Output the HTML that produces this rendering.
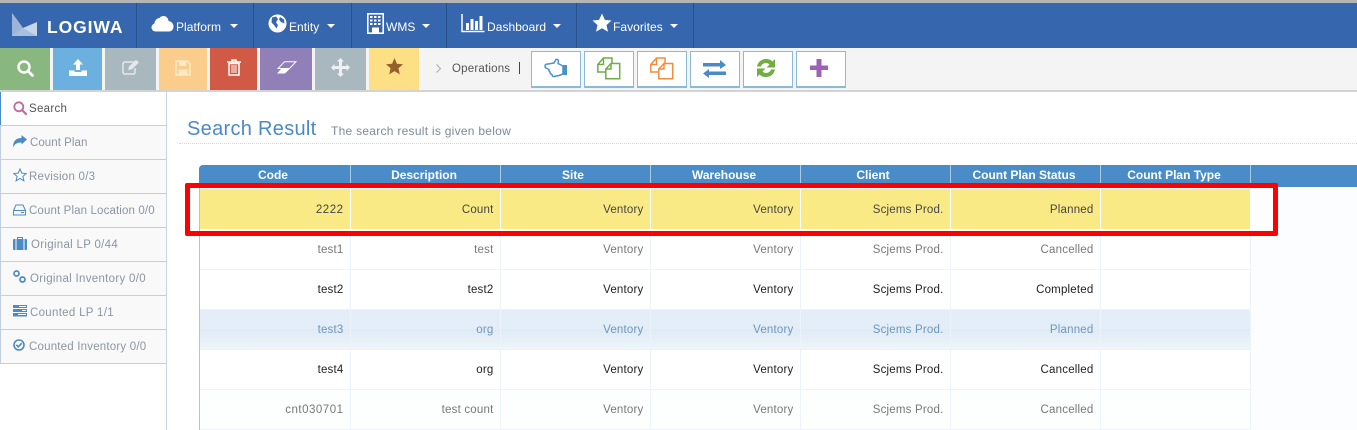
<!DOCTYPE html>
<html><head><meta charset="utf-8"><style>
html,body{margin:0;padding:0;background:#fff}
body{width:1357px;height:430px;overflow:hidden;position:relative;font-family:"Liberation Sans",sans-serif}
.a{position:absolute}
svg{position:absolute;display:block}
.nav{position:absolute;top:3px;height:45px;border-right:1px solid #265089}
.nt{position:absolute;top:20px;line-height:14px;color:#fff;white-space:nowrap;font-family:"Liberation Sans",sans-serif;font-size:12px;letter-spacing:.05px}
.car{position:absolute;top:24px;width:0;height:0;border-left:4.5px solid transparent;border-right:4.5px solid transparent;border-top:4.5px solid #fff}
.tb{position:absolute;top:48px;height:42px}
.op{position:absolute;top:51px;width:48px;height:34px;background:#fff;border:1px solid #8bb9d6;border-bottom-width:2px}
.si{position:absolute;left:1px;width:165px;height:33px;background:#f9f9f9;border-bottom:1px solid #c3cfdf}
.st{position:absolute;top:10px;font-size:11.5px;line-height:14px;color:#8a96a3;white-space:nowrap;font-family:"Liberation Sans",sans-serif;letter-spacing:.15px}
table{position:absolute;left:200px;top:189px;border-collapse:collapse;table-layout:fixed;width:1050px;font-family:"Liberation Sans",sans-serif;font-size:11.5px;letter-spacing:.2px}
td{height:39px;padding:2px 6px 0 0;text-align:right;border-right:1px solid #edf3fa;border-bottom:1px solid #edf3fa;box-sizing:border-box;overflow:hidden;white-space:nowrap}
tr{height:40px}
.w{letter-spacing:.5px}
.h{position:absolute;top:168px;height:14px;width:150px;text-align:center;color:#fff;font:bold 12px/14px "Liberation Sans",sans-serif;letter-spacing:-.02px}
.hs{position:absolute;top:165px;width:1px;height:20px;background:#a9cbe6}
</style></head><body>
<div class="a" style="left:0;top:0;width:1357px;height:3px;background:#b5b5b5"></div>
<div class="a" style="left:0;top:3px;width:1357px;height:45px;background:#3566ae"></div>

<svg style="left:12px;top:13px" width="26" height="24" viewBox="0 0 26 24"><path d="M0 0L11 15L25 9V23H0Z" fill="#c8d6ea"/><path d="M0 23L11 15L25 23Z" fill="#a9bfde"/><path d="M0 0L11 15L0 23Z" fill="#9db5d8"/></svg>
<div class="a" style="left:47px;top:17px;font:bold 17.5px/20px 'Liberation Sans',sans-serif;color:#fff;letter-spacing:.9px">LOGIWA</div>

<div class="nav" style="left:136px;width:0"></div>
<div class="nav" style="left:253px;width:0"></div>
<div class="nav" style="left:351px;width:0"></div>
<div class="nav" style="left:446px;width:0"></div>
<div class="nav" style="left:576px;width:0"></div>
<div class="nav" style="left:693px;width:0"></div>

<svg style="left:151px;top:15px" width="23" height="17" viewBox="0 0 23 17"><path d="M5 16.500C2 16.500 0.500 14.500 0.500 12.500C0.500 10.500 2 9 3.500 8.500C3.500 5.500 6 3 8.500 3C9.500 1.500 11 1 12.500 1C15.500 1 17.500 3.500 17.500 6C20.500 6.500 22.500 8.500 22.500 11.500C22.500 14.500 20.500 16.500 18 16.500Z" fill="#fff"/></svg>
<div class="nt" style="left:176px">Platform</div><div class="car" style="left:230px"></div>

<svg style="left:268px;top:14px" width="19" height="19" viewBox="0 0 19 19"><circle cx="9.500" cy="9.500" r="9" fill="#fff"/><path d="M4 3.500L8 2.500L10 5L8 8.500L10 11L8.500 14.500L6 11L3.500 8.500ZM12 3L16 5.500L16.500 9.500L13 8L11 5.500Z" fill="#3566ae"/></svg>
<div class="nt" style="left:289px">Entity</div><div class="car" style="left:327px"></div>

<svg style="left:367px;top:13px" width="17" height="21" viewBox="0 0 17 21"><rect x="0.800" y="0.800" width="15.400" height="19.400" fill="none" stroke="#fff" stroke-width="1.600"/><g fill="#fff"><rect x="3" y="3" width="2.500" height="2"/><rect x="7" y="3" width="2.500" height="2"/><rect x="11" y="3" width="2.500" height="2"/><rect x="3" y="6.500" width="2.500" height="2"/><rect x="7" y="6.500" width="2.500" height="2"/><rect x="11" y="6.500" width="2.500" height="2"/><rect x="3" y="10" width="2.500" height="2"/><rect x="7" y="10" width="2.500" height="2"/><rect x="11" y="10" width="2.500" height="2"/><rect x="5" y="14.500" width="7" height="5.500"/></g></svg>
<div class="nt" style="left:386px">WMS</div><div class="car" style="left:422px"></div>

<svg style="left:461px;top:14px" width="24" height="19" viewBox="0 0 24 19"><path d="M1 0V17.500H23.500" fill="none" stroke="#fff" stroke-width="1.500"/><g fill="#fff"><rect x="5" y="9" width="3" height="7"/><rect x="9.500" y="5" width="3" height="11"/><rect x="14" y="7" width="3" height="9"/><rect x="18.500" y="2" width="3" height="14"/></g></svg>
<div class="nt" style="left:487px">Dashboard</div><div class="car" style="left:553px"></div>

<svg style="left:592px;top:13px" width="20" height="20" viewBox="0 0 20 20"><path d="M10 0.500L12.900 6.900L19.500 7.500L14.500 12.100L16 18.800L10 15.300L4 18.800L5.500 12.100L0.500 7.500L7.100 6.900Z" fill="#fff"/></svg>
<div class="nt" style="left:613px">Favorites</div><div class="car" style="left:670px"></div>

<div class="a" style="left:0;top:48px;width:1357px;height:43px;background:#f4f4f4"></div>
<div class="a" style="left:0;top:90px;width:1357px;height:2px;background:#d3d3d3"></div>

<div class="tb" style="left:0;width:50px;background:#88b77f"></div>
<div class="tb" style="left:53px;width:49px;background:#6cb0e0"></div>
<div class="tb" style="left:105px;width:51px;background:#a9b7bf"></div>
<div class="tb" style="left:159px;width:48px;background:#fbcd8d"></div>
<div class="tb" style="left:210px;width:47px;background:#d05a46"></div>
<div class="tb" style="left:260px;width:52px;background:#9180b8"></div>
<div class="tb" style="left:315px;width:51px;background:#a9b7bf"></div>
<div class="tb" style="left:369px;width:50px;background:#fddf85"></div>

<svg style="left:17px;top:60px" width="17" height="17" viewBox="0 0 17 17"><circle cx="7" cy="7" r="5.500" fill="none" stroke="#fff" stroke-width="2.400"/><path d="M11 11L15.500 15.500" stroke="#fff" stroke-width="2.800" stroke-linecap="round"/></svg>
<svg style="left:69px;top:59px" width="18" height="17" viewBox="0 0 18 17"><path d="M9 0L14 5.500H11V11H7V5.500H4Z" fill="#fff"/><path d="M0 11.500H5.500V13H12.500V11.500H18V17H0Z" fill="#fff"/></svg>
<svg style="left:122px;top:59px" width="18" height="16" viewBox="0 0 18 16"><path d="M12 3H3Q1 3 1 5V13Q1 15 3 15H11Q13 15 13 13V9" fill="none" stroke="#e4e9ec" stroke-width="1.500"/><path d="M6 11L7 7.500L14 0.700L17 3.500L10 10.300Z" fill="#e4e9ec"/></svg>
<svg style="left:175px;top:60px" width="16" height="16" viewBox="0 0 16 16"><path d="M1 1H12L15 4V15H1Z" fill="none" stroke="#fde9c6" stroke-width="1.600"/><path d="M4 1.500H11V6H4ZM3.500 9.500H12.500V14.500H3.500Z" fill="#fde9c6"/></svg>
<svg style="left:227px;top:59px" width="14" height="17" viewBox="0 0 14 17"><path d="M0 3H14M5 3V1H9V3" fill="none" stroke="#fff" stroke-width="1.500"/><path d="M2 4.500H12V16H2Z" fill="none" stroke="#fff" stroke-width="1.500"/><path d="M5 6V14M7 6V14M9 6V14" stroke="#fff" stroke-width="1"/></svg>
<svg style="left:277px;top:61px" width="20" height="13" viewBox="0 0 20 13"><path d="M7.500 0.700H19L12.500 7.500H1Z" fill="none" stroke="#fff" stroke-width="1"/><path d="M5 7H13.500L8 12.500H0Z" fill="#fff"/></svg>
<svg style="left:331px;top:58px" width="19" height="19" viewBox="0 0 19 19"><path d="M9.500 0L13 3.500H11V8H15.500V6L19 9.500L15.500 13V11H11V15.500H13L9.500 19L6 15.500H8V11H3.500V13L0 9.500L3.500 6V8H8V3.500H6Z" fill="#eef1f3"/></svg>
<svg style="left:386px;top:58px" width="17" height="17" viewBox="0 0 16 16"><path d="M8 0L10.300 5.400L16 5.900L11.700 9.700L13 15.400L8 12.400L3 15.400L4.300 9.700L0 5.900L5.700 5.400Z" fill="#96602e"/></svg>

<svg style="left:435px;top:63px" width="7" height="11" viewBox="0 0 7 11"><path d="M1.500 1.500L5.500 5.500L1.500 9.500" fill="none" stroke="#aaa" stroke-width="1"/></svg>
<div class="a" style="left:452px;top:62px;font:11.500px/14px 'Liberation Sans',sans-serif;color:#555;letter-spacing:.2px">Operations</div>
<div class="a" style="left:519px;top:62px;width:1px;height:12px;background:#444"></div>

<div class="op" style="left:531px"></div>
<div class="op" style="left:584px"></div>
<div class="op" style="left:637px"></div>
<div class="op" style="left:690px"></div>
<div class="op" style="left:743px"></div>
<div class="op" style="left:796px"></div>

<svg style="left:544px;top:58px" width="24" height="20" viewBox="0 0 24 20"><path d="M1 8Q1 6 4 6L10 5L12 1.500Q14 1 14.500 3L14 5.500L19 8V16L15 17.500L10 18.500Q8 18.500 8 16.500Q6 16 6 14Q4.500 13 5 11.500L3 10.500Q1 10 1 8Z" fill="#fff" stroke="#4a90d0" stroke-width="1.500" stroke-linejoin="round"/><rect x="19" y="7" width="4" height="10" fill="#4a90d0"/></svg>
<svg style="left:597px;top:57px" width="24" height="23" viewBox="0 0 24 23"><path d="M0.800 7.500L6.500 1H15V15H0.800ZM6.500 1V7.500H0.800" fill="#fff" stroke="#70ab4c" stroke-width="1.500"/><path d="M8.800 12L14 6.500H22.700V21.800H8.800ZM14 6.500V12H8.800" fill="#fff" stroke="#70ab4c" stroke-width="1.500"/></svg>
<svg style="left:650px;top:57px" width="24" height="23" viewBox="0 0 24 23"><path d="M0.800 7.500L6.500 1H15V15H0.800ZM6.500 1V7.500H0.800" fill="#fff" stroke="#f28d3c" stroke-width="1.500"/><path d="M8.800 12L14 6.500H22.700V21.800H8.800ZM14 6.500V12H8.800" fill="#fff" stroke="#f28d3c" stroke-width="1.500"/></svg>
<svg style="left:703px;top:60px" width="23" height="18" viewBox="0 0 23 18"><path d="M0 3H17V0L23 5L17 9V6.500H0Z" fill="#4a8ac6"/><path d="M23 11.500H6V9L0 13.500L6 18V15H23Z" fill="#4a8ac6"/></svg>
<svg style="left:756px;top:58px" width="20" height="20" viewBox="0 0 20 20"><path d="M1 8.500C2 3.500 6 1 10 1C13 1 15 2 16.500 3.500L19 1V9.500H10.500L13.500 6.500C12.500 5.500 11.500 5 10 5C7.500 5 5.500 6.500 5 8.500Z" fill="#6fae3f"/><path d="M19 11.500C18 16.500 14 19 10 19C7 19 5 18 3.500 16.500L1 19V10.500H9.500L6.500 13.500C7.500 14.500 8.500 15 10 15C12.500 15 14.500 13.500 15 11.500Z" fill="#6fae3f"/></svg>
<svg style="left:810px;top:59px" width="18" height="18" viewBox="0 0 18 18"><path d="M6.500 0H11.500V6.500H18V11H11.500V18H6.500V11H0V6.500H6.500Z" fill="#9b62b8"/></svg>

<!-- sidebar -->
<div class="a" style="left:166px;top:92px;width:1px;height:338px;background:#c9d5e4"></div>
<div class="a" style="left:0;top:92px;width:1px;height:272px;background:#c3cfdf"></div>
<div class="a" style="left:0;top:92px;width:1px;height:33px;background:#4a8ac6"></div>
<div class="a" style="left:1px;top:92px;width:165px;height:33px;background:#fff;border-bottom:1px solid #c3cfdf"></div>
<svg style="left:13px;top:101px" width="14" height="14" viewBox="0 0 14 14"><circle cx="5.800" cy="5.800" r="4.500" fill="none" stroke="#c0699f" stroke-width="1.800"/><path d="M9 9L13 13" stroke="#c0699f" stroke-width="2.200" stroke-linecap="round"/></svg>
<div class="a" style="left:29px;top:102px;font:11.500px/14px 'Liberation Sans',sans-serif;color:#555;letter-spacing:.3px">Search</div>

<div class="si" style="top:126px"><div class="st" style="left:29px;letter-spacing:.05px">Count Plan</div></div>
<svg style="left:13px;top:135px" width="14" height="13" viewBox="0 0 14 13"><path d="M14 4.500L8.500 0V3C3 3 0 6 0 12.500C1.500 9 4 7.500 8.500 7.500V9.500Z" fill="#4a8ac6"/></svg>
<div class="si" style="top:160px"><div class="st" style="left:28px;letter-spacing:.25px">Revision 0/3</div></div>
<svg style="left:13px;top:168px" width="14" height="14" viewBox="0 0 14 14"><path d="M7 1L8.800 5.100L13.200 5.500L9.900 8.400L10.900 12.800L7 10.500L3.100 12.800L4.100 8.400L0.800 5.500L5.200 5.100Z" fill="none" stroke="#4a8ac6" stroke-width="1"/></svg>
<div class="si" style="top:194px"><div class="st" style="left:28px;letter-spacing:.13px">Count Plan Location 0/0</div></div>
<svg style="left:13px;top:204px" width="13" height="12" viewBox="0 0 13 12"><path d="M3 1H10L12.500 6.500V11H0.500V6.500ZM0.500 6.500H12.500" fill="none" stroke="#4a8ac6" stroke-width="1"/><rect x="8" y="8" width="3" height="1" fill="#4a8ac6"/></svg>
<div class="si" style="top:228px"><div class="st" style="left:30px;letter-spacing:.3px">Original LP 0/44</div></div>
<svg style="left:13px;top:237px" width="14" height="13" viewBox="0 0 14 13"><path d="M4.500 2V0.500H9.500V2" fill="none" stroke="#4a8ac6"/><rect x="0" y="2" width="14" height="11" rx="1" fill="#4a8ac6"/><rect x="2.500" y="2" width="1" height="11" fill="#f9f9f9"/><rect x="10.500" y="2" width="1" height="11" fill="#f9f9f9"/></svg>
<div class="si" style="top:262px"><div class="st" style="left:29px;letter-spacing:.3px">Original Inventory 0/0</div></div>
<svg style="left:13px;top:270px" width="13" height="14" viewBox="0 0 13 14"><circle cx="3.500" cy="3.500" r="2.500" fill="none" stroke="#4a8ac6" stroke-width="1.700"/><circle cx="9.500" cy="9.500" r="2.500" fill="none" stroke="#4a8ac6" stroke-width="1.700"/></svg>
<div class="si" style="top:296px"><div class="st" style="left:29px;letter-spacing:.3px">Counted LP 1/1</div></div>
<svg style="left:13px;top:305px" width="14" height="12" viewBox="0 0 14 12"><rect width="14" height="3" fill="#4a8ac6"/><rect y="4" width="14" height="3" fill="#4a8ac6"/><rect y="8" width="14" height="3.500" fill="#4a8ac6"/><rect x="6" y="1" width="7" height="1" fill="#fff"/><rect x="9" y="5" width="4" height="1" fill="#fff"/><rect x="5" y="9" width="8" height="1" fill="#fff"/></svg>
<div class="si" style="top:330px"><div class="st" style="left:28px;letter-spacing:.2px">Counted Inventory 0/0</div></div>
<svg style="left:13px;top:339px" width="12" height="12" viewBox="0 0 12 12"><circle cx="6" cy="6" r="5" fill="none" stroke="#4a8ac6" stroke-width="1.600"/><path d="M3.300 5.800L5.300 7.800L8.800 4.200" fill="none" stroke="#4a8ac6" stroke-width="1.600"/></svg>

<!-- title -->
<div class="a" style="left:187px;top:116px;font:20px/26px 'Liberation Sans',sans-serif;color:#4a8ac6;letter-spacing:.3px">Search Result</div>
<div class="a" style="left:331px;top:124px;font:12px/15px 'Liberation Sans',sans-serif;color:#7b8a99;letter-spacing:.27px">The search result is given below</div>
<div class="a" style="left:179px;top:143px;width:1178px;height:0;border-top:1px dotted #d5d5d5"></div>

<!-- table -->
<div class="a" style="left:199px;top:165px;width:1158px;height:22px;background:#4a8cc8;border-top-left-radius:4px"></div>
<div class="a" style="left:199px;top:187px;width:1px;height:243px;background:#a9c6e4"></div>
<div class="a" style="left:1250px;top:187px;width:107px;height:243px;background:#fcfdfe"></div>
<div class="hs" style="left:350px"></div><div class="hs" style="left:500px"></div><div class="hs" style="left:650px"></div><div class="hs" style="left:800px"></div><div class="hs" style="left:950px"></div><div class="hs" style="left:1100px"></div><div class="hs" style="left:1250px"></div>
<div class="h" style="left:198px">Code</div><div class="h" style="left:349px">Description</div><div class="h" style="left:498px">Site</div><div class="h" style="left:649px">Warehouse</div><div class="h" style="left:798px">Client</div><div class="h" style="left:949px">Count Plan Status</div><div class="h" style="left:1099px">Count Plan Type</div>

<table>
<colgroup><col style="width:150px"><col style="width:150px"><col style="width:150px"><col style="width:150px"><col style="width:150px"><col style="width:150px"><col style="width:150px"></colgroup>
<tr style="background:#faea85;color:#444"><td style="border-color:#fff"><span class="w">2222</span></td><td style="border-color:#fff">Count</td><td style="border-color:#fff">Ventory</td><td style="border-color:#fff">Ventory</td><td style="border-color:#fff">Scjems Prod.</td><td style="border-color:#fff">Planned</td><td style="border-color:#fff"></td></tr>
<tr style="background:#fff;color:#777"><td>test1</td><td>test</td><td>Ventory</td><td>Ventory</td><td>Scjems Prod.</td><td>Cancelled</td><td></td></tr>
<tr style="background:#fff;color:#222"><td>test2</td><td>test2</td><td>Ventory</td><td>Ventory</td><td>Scjems Prod.</td><td>Completed</td><td></td></tr>
<tr style="background:linear-gradient(#e3eef8 0,#e3eef8 50%,#dfeaf5 50%,#eef5fb 100%);color:#6d97bb"><td>test3</td><td>org</td><td>Ventory</td><td>Ventory</td><td>Scjems Prod.</td><td>Planned</td><td></td></tr>
<tr style="background:#fff;color:#222"><td>test4</td><td>org</td><td>Ventory</td><td>Ventory</td><td>Scjems Prod.</td><td>Cancelled</td><td></td></tr>
<tr style="background:#fdfefe;color:#777"><td><span class="w">cnt030701</span></td><td>test count</td><td>Ventory</td><td>Ventory</td><td>Scjems Prod.</td><td>Cancelled</td><td></td></tr>
</table>

<div class="a" style="left:185px;top:183px;width:1083px;height:43px;border:5px solid #f00;border-radius:2px"></div>
</body></html>
